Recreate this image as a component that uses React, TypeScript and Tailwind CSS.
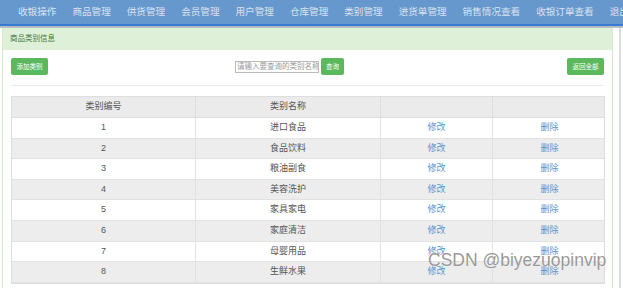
import React from "react";

const navItems = [
  "收银操作",
  "商品管理",
  "供货管理",
  "会员管理",
  "用户管理",
  "仓库管理",
  "类别管理",
  "进货单管理",
  "销售情况查看",
  "收银订单查看",
  "退出",
];

const rows = [
  ["1", "进口食品"],
  ["2", "食品饮料"],
  ["3", "粮油副食"],
  ["4", "美容洗护"],
  ["5", "家具家电"],
  ["6", "家庭清洁"],
  ["7", "母婴用品"],
  ["8", "生鲜水果"],
];

export default function App() {
  return (
    <div
      className="relative w-[623px] h-[288px] overflow-hidden bg-white"
      style={{ fontFamily: '"Liberation Sans", "Noto Sans CJK SC", sans-serif' }}
    >
      <nav className="h-[26px] bg-[#6798cd] border-b-2 border-[#3a7bd2] flex items-center pl-[18px] gap-[16px] whitespace-nowrap">
        {navItems.map((t) => (
          <span key={t} className="text-[9.6px] text-[#d9e2ee] leading-none">
            {t}
          </span>
        ))}
      </nav>
      <div className="h-[2px] bg-[#b5bcc4]" />
      <div className="flex">
        <div className="ml-[2px] w-[611px] h-[260px] border-l border-r border-[#d6e9c6]">
          <div className="h-[22px] bg-[#dff0d8] flex items-center pl-[7px] text-[7.5px] text-[#3c763d]">
            商品类别信息
          </div>
          <div className="px-[8px] pt-[8px]">
            <div className="flex items-center h-[17px]">
              <button className="h-[17px] w-[37px] rounded-[2px] bg-[#5cb85c] text-white text-[6.5px] flex items-center justify-center">
                添加类别
              </button>
              <div className="ml-[187px] flex items-center gap-[2px]">
                <div className="w-[84px] h-[12px] border border-[#bbb] bg-white flex items-center pl-[1px] overflow-hidden whitespace-nowrap text-[7.5px] text-[#999] leading-none">
                  请输入要查询的类别名称
                </div>
                <button className="h-[17px] w-[23px] rounded-[2px] bg-[#5cb85c] text-white text-[6.5px] flex items-center justify-center">
                  查询
                </button>
              </div>
              <button className="ml-auto h-[17px] w-[37px] rounded-[2px] bg-[#5cb85c] text-white text-[6.5px] flex items-center justify-center">
                返回全部
              </button>
            </div>
            <div className="mt-[10px] h-px bg-[#eaeaea]" />
            <div className="mt-[10px] w-[594px] border border-[#dedede] text-[9px] text-[#555]">
              <div className="grid grid-cols-[184px_185px_112px_113px] h-[21px] bg-[#ebebeb] border-b border-[#dedede]">
                <div className="flex items-center justify-center border-r border-[#dedede]">类别编号</div>
                <div className="flex items-center justify-center border-r border-[#dedede]">类别名称</div>
                <div className="border-r border-[#dedede]" />
                <div />
              </div>
              {rows.map(([id, name], i) => (
                <div
                  key={id}
                  className={`grid grid-cols-[184px_185px_112px_113px] h-[20.6px] border-b border-[#e2e2e2] ${
                    i % 2 === 1 ? "bg-[#ededed]" : "bg-white"
                  }`}
                >
                  <div className="flex items-center justify-center border-r border-[#e2e2e2]">{id}</div>
                  <div className="flex items-center justify-center border-r border-[#e2e2e2]">{name}</div>
                  <div className="flex items-center justify-center border-r border-[#e2e2e2] text-[#5a93cc]">修改</div>
                  <div className="flex items-center justify-center text-[#5a93cc]">删除</div>
                </div>
              ))}
            </div>
          </div>
        </div>
        <div className="ml-[6px] w-[2px] h-[260px] bg-[#dcdcdc]" />
      </div>
      <div
        className="absolute left-[428px] top-[252px] text-[17.5px] leading-none text-[#999] whitespace-nowrap"
        style={{ textShadow: "0 0 1px #fff" }}
      >
        CSDN @biyezuopinvip
      </div>
    </div>
  );
}
